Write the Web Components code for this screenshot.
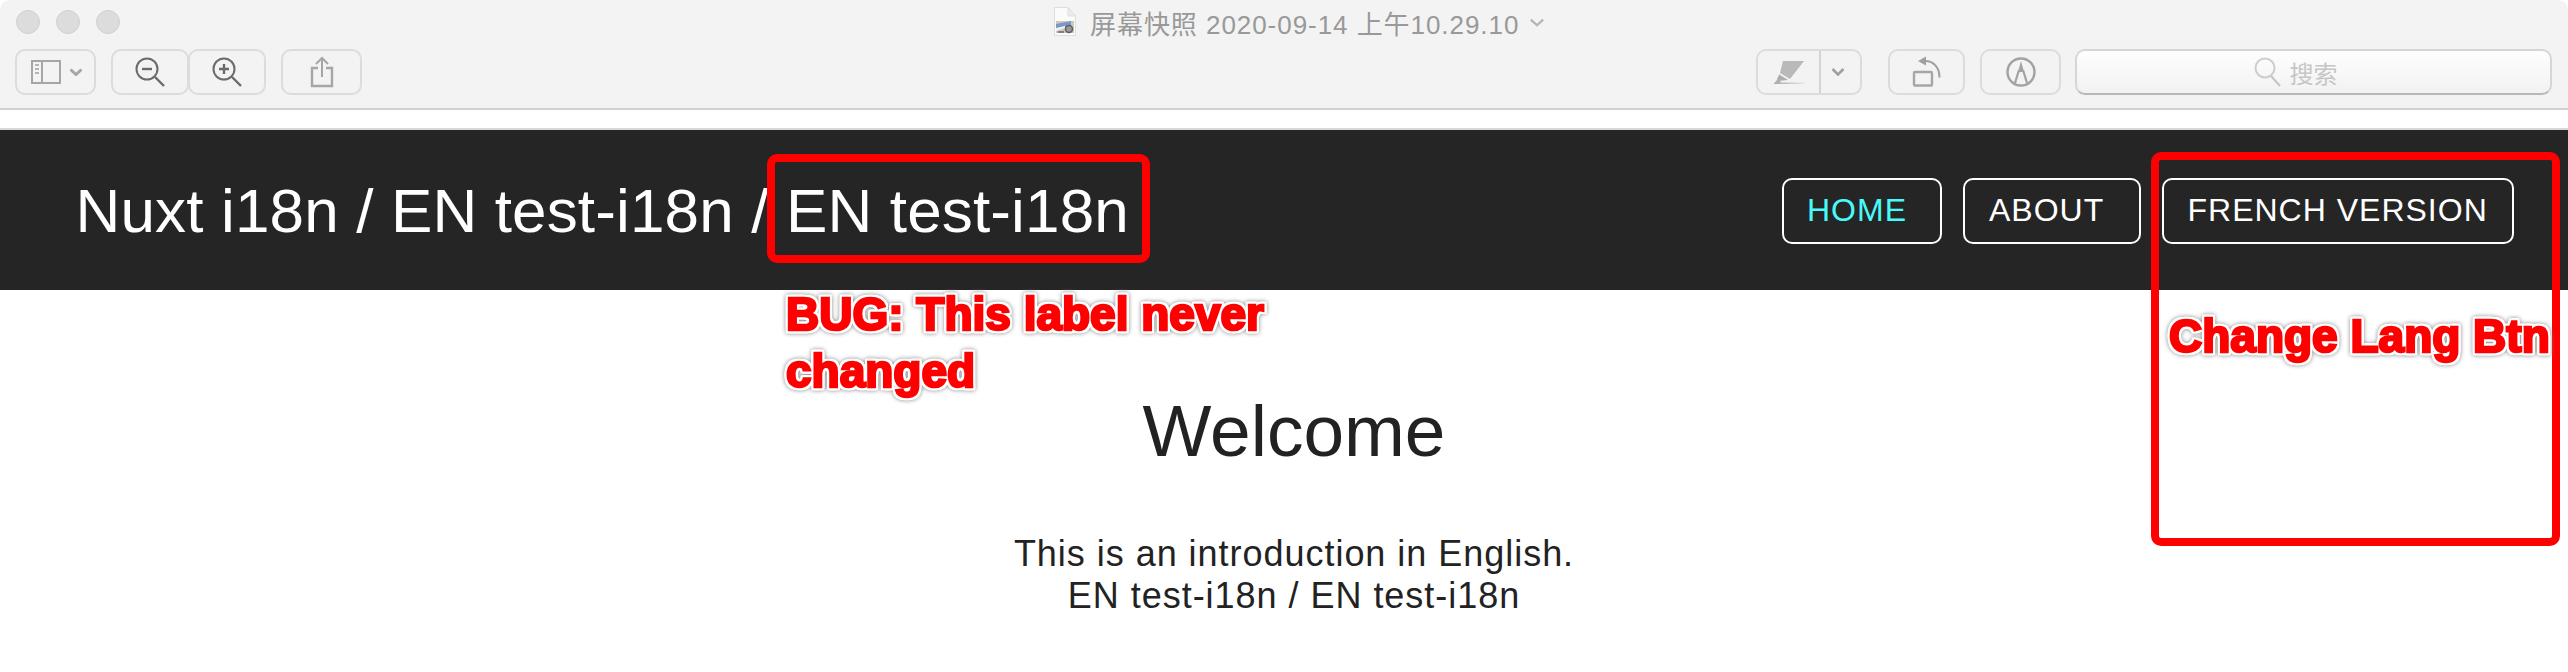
<!DOCTYPE html>
<html lang="en">
<head>
<meta charset="utf-8">
<title>Nuxt i18n</title>
<style>
html,body{margin:0;padding:0;background:#fff}
body{width:2568px;height:672px;overflow:hidden;position:relative;font-family:"Liberation Sans",Arial,sans-serif}
</style>
</head>
<body>
<mac-toolbar></mac-toolbar>
<site-header>
  <nav-button active style="--w:160px;--pl:23px">HOME</nav-button>
  <nav-button style="--w:177.5px;--pl:24px">ABOUT</nav-button>
  <nav-button style="--w:352px;--pl:24px">FRENCH VERSION</nav-button>
</site-header>
<welcome-main></welcome-main>

<note-box style="left:767px;top:154px;width:383px;height:109px"></note-box>
<note-box style="left:2151px;top:152px;width:409px;height:394px"></note-box>
<call-out style="left:786px;top:286px">BUG: This label never<br>changed</call-out>
<call-out style="left:2169px;top:308px">Change Lang Btn</call-out>

<script>
function def(name, html){
  const t=document.createElement('template');t.innerHTML=html;
  customElements.define(name,class extends HTMLElement{
    constructor(){super();this.attachShadow({mode:'open'}).appendChild(t.content.cloneNode(true));}
  });
}

def('tool-button',`<style>
:host{display:flex;align-items:center;justify-content:center;box-sizing:border-box;height:46px;border:2px solid #dcdcdc;border-radius:10px;background:#f3f3f3}
</style><slot></slot>`);

def('mac-toolbar',`<style>
:host{display:block;box-sizing:border-box;height:110px;background:#f3f3f3;border-bottom:2px solid #d0d0d0;border-radius:10px 10px 0 0;font-family:"Liberation Sans","Noto Sans CJK SC",sans-serif}
.top{display:flex;align-items:center;height:49px;box-sizing:border-box;padding:0 0 5px 16px}
.lights{display:flex;gap:16px}
.lights i{display:block;box-sizing:border-box;width:24px;height:24px;border-radius:50%;background:#dcdcdc;border:1px solid #d0d0d0}
.title{display:flex;align-items:center;margin-left:933px;color:#999;font-size:26px;white-space:nowrap;height:40px}
.title svg.doc{margin-right:13px}
.title span{letter-spacing:.95px}
.title svg.c{margin-left:10px}
.bar{display:flex;align-items:center;padding:0 16px 0 15px}
.gap1{margin-left:15px}
.gap2{margin-left:15px}
.split{margin-left:auto;display:flex;padding:0}
.mk{justify-content:flex-start}
.mk .div{width:2px;height:100%;background:#d4d4d4;margin-left:14px}
.search{box-sizing:border-box;width:477px;height:46px;margin-left:14px;border:2px solid #d6d6d6;border-bottom-color:#b8b8b8;border-radius:10px;background:linear-gradient(#fefefe,#f2f2f2);display:flex;align-items:center;justify-content:center;color:#c6c6c6;font-size:24px;gap:8px;padding-right:36px}
</style>
<div class="top">
  <div class="lights"><i></i><i></i><i></i></div>
  <div class="title">
    <svg class="doc" width="24" height="30" viewBox="0 0 24 30"><path d="M1.5.5H15L22.5 9V28.5H1.5Z" fill="#fbfbfb" stroke="#dedede"/><path d="M15 .5V9H22.5Z" fill="#ececec" stroke="#dedede"/><rect x="3" y="14" width="18" height="12" fill="#cfc8b8"/><path d="M3 17 18 14V19L3 23Z" fill="#7d95c8"/><path d="M3 21 12 19V21L3 24Z" fill="#eef1f7"/><circle cx="16" cy="22" r="3.5" fill="#9a9a9a" stroke="#5f5f5f" stroke-width="1.5"/><path d="M5 25H11" stroke="#666" stroke-width="1.5"/></svg>
    <span>屏幕快照 2020-09-14 上午10.29.10</span>
    <svg class="c" width="16" height="9" viewBox="0 0 14 8"><path d="M1.5 1.5 7 6.5 12.5 1.5" fill="none" stroke="#b5b5b5" stroke-width="2"/></svg>
  </div>
</div>
<div class="bar">
  <tool-button style="width:81px;gap:8px;padding-left:2px">
    <svg width="30" height="24" viewBox="0 0 30 24"><rect x="1" y="1" width="28" height="22" fill="none" stroke="#a6a6a6" stroke-width="2"/><path d="M11 1V23" stroke="#a6a6a6" stroke-width="2"/><path d="M4 5H8M4 9H8M4 13H8" stroke="#b4b4b4" stroke-width="2"/></svg>
    <svg width="14" height="8" viewBox="0 0 14 8"><path d="M1.5 1.5 7 6.5 12.5 1.5" fill="none" stroke="#a6a6a6" stroke-width="3"/></svg>
  </tool-button>
  <tool-button class="gap1" style="width:78px">
    <svg width="30" height="30" viewBox="0 0 30 30"><circle cx="12" cy="12" r="10.5" fill="none" stroke="#6b6b6b" stroke-width="2"/><path d="M7 12H17" stroke="#6b6b6b" stroke-width="2.4"/><path d="M20 20 29 29" stroke="#6b6b6b" stroke-width="2.4"/></svg>
  </tool-button>
  <tool-button style="width:78px;margin-left:-1px">
    <svg width="30" height="30" viewBox="0 0 30 30"><circle cx="12" cy="12" r="10.5" fill="none" stroke="#6b6b6b" stroke-width="2"/><path d="M7 12H17M12 7V17" stroke="#6b6b6b" stroke-width="2.4"/><path d="M20 20 29 29" stroke="#6b6b6b" stroke-width="2.4"/></svg>
  </tool-button>
  <tool-button class="gap2" style="width:81px">
    <svg width="24" height="32" viewBox="0 0 24 32"><path d="M8 12H2V30H22V12H16" fill="none" stroke="#a6a6a6" stroke-width="2.4"/><path d="M12 21V2M6 8 12 2 18 8" fill="none" stroke="#a6a6a6" stroke-width="2"/></svg>
  </tool-button>
  <div class="split">
    <tool-button class="mk" style="width:106px">
      <svg style="margin-left:16px" width="31" height="25" viewBox="0 0 31 25"><defs><linearGradient id="f"><stop offset="0" stop-color="#a8a8a8"/><stop offset="1" stop-color="#e6e6e6"/></linearGradient></defs><path d="M9 1H30L16 19 6 13Z" fill="#b9b9b9"/><path d="M4.5 14 14 20 4 21 3 19 5 15Z" fill="#adadad"/><path d="M0 23.5 3 20H6L7 22.5H30V24H0Z" fill="url(#f)"/></svg>
      <span class="div"></span>
      <svg style="margin-left:10px" width="14" height="8" viewBox="0 0 14 8"><path d="M1.5 1 7 6.5 12.5 1" fill="none" stroke="#a0a0a0" stroke-width="2.6"/></svg>
    </tool-button>
    <tool-button style="width:77px;margin-left:26px">
      <svg width="32" height="32" viewBox="0 0 32 32"><rect x="3" y="16" width="18" height="13.5" rx="1" fill="none" stroke="#a6a6a6" stroke-width="2.4"/><path d="M14 5C23 5 28.5 12 28.5 21.5" fill="none" stroke="#a0a0a0" stroke-width="2"/><path d="M7 5 15 .5V9.5Z" fill="#a0a0a0"/></svg>
    </tool-button>
    <tool-button style="width:81px;margin-left:15px">
      <svg width="32" height="30" viewBox="0 0 32 30"><circle cx="16" cy="15" r="13.5" fill="none" stroke="#a2a2a2" stroke-width="2.4"/><path d="M10 26 14 13M22 26 18 13" fill="none" stroke="#a2a2a2" stroke-width="2.2"/><path d="M13 15 16 4 19 15Z" fill="#a2a2a2"/></svg>
    </tool-button>
    <div class="search">
      <svg width="28" height="30" viewBox="0 0 28 30"><circle cx="11" cy="11" r="9.5" fill="none" stroke="#cdcdcd" stroke-width="2"/><path d="M17 19 26 29" stroke="#c4c4c4" stroke-width="2"/></svg>
      <span>搜索</span>
    </div>
  </div>
</div>`);

def('nav-button',`<style>
:host{display:inline-flex;flex:none;align-items:center;box-sizing:border-box;width:var(--w);height:66px;border:2px solid #fff;border-radius:10px;padding:0 0 2px var(--pl,24px);color:#fff;font:32px "Liberation Sans",Arial,sans-serif;letter-spacing:1px;white-space:nowrap}
:host([active]){color:#48fafa}
</style><slot></slot>`);

def('site-header',`<style>
:host{display:flex;align-items:center;justify-content:space-between;box-sizing:border-box;height:162px;margin-top:18px;border-top:2px solid #d8d8dc;background:#252525;color:#fff;padding:0 54.5px 0 75.5px}
.t{font-size:62px;letter-spacing:.15px;white-space:nowrap}
nav{display:flex;gap:21px;margin-top:2px}
</style>
<div class="t">Nuxt i18n / EN test-i18n / EN test-i18n</div>
<nav><slot></slot></nav>`);

def('welcome-main',`<style>
:host{display:block;padding-left:20px;text-align:center;color:#222}
h1{margin:99px 0 61px;font-size:73px;font-weight:400;line-height:83px}
p{margin:0;font-size:36px;line-height:41.5px;letter-spacing:.97px}
</style>
<h1>Welcome</h1>
<p>This is an introduction in English.<br>EN test-i18n / EN test-i18n</p>`);

def('note-box',`<style>
:host{display:block;position:absolute;box-sizing:border-box;border:8px solid #fe0000;border-radius:10px}
</style>`);

def('call-out',`<style>
:host{display:block;position:absolute;color:#fe0000;font:700 46px/57px "Liberation Sans",Arial,sans-serif;white-space:nowrap;-webkit-text-stroke:2.5px #fe0000;
filter:drop-shadow(2px 0 0 #fff) drop-shadow(-2px 0 0 #fff) drop-shadow(0 2px 0 #fff) drop-shadow(0 -2px 0 #fff) drop-shadow(0 0 2px #8a8a8a)}
</style><slot></slot>`);
</script>
</body>
</html>
